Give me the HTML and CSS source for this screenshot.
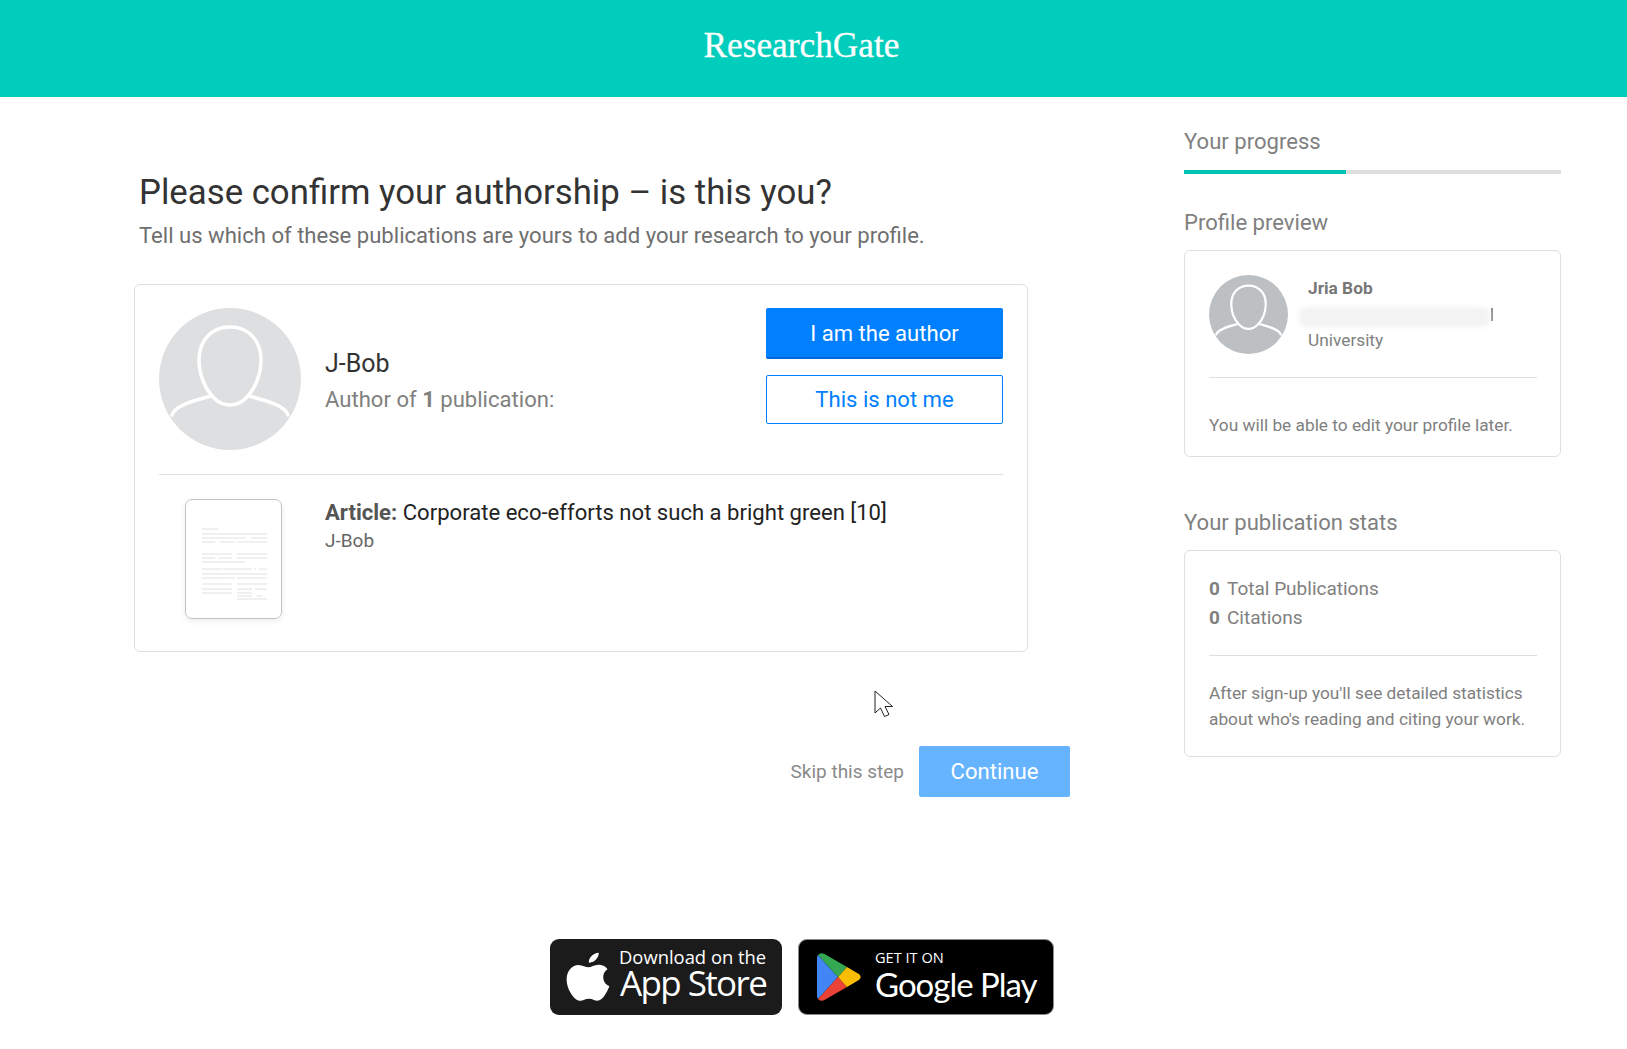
FILE: index.html
```html
<!DOCTYPE html>
<html lang="en">
<head>
    <meta charset="UTF-8">
    <meta name="viewport" content="width=device-width, initial-scale=1.0">
    <title>ResearchGate</title>
    <link rel="stylesheet" href="styles.css">
</head>
<body>
    <header class="top">
        <span class="logo">ResearchGate</span>
    </header>

    <div class="layout">
        <main class="main">
            <h1 class="title">Please confirm your authorship – is this you?</h1>
            <p class="subtitle">Tell us which of these publications are yours to add your research to your profile.</p>

            <section class="card">
                <div class="author">
                    <svg class="avatar" viewBox="0 0 142 142">
                        <circle class="avatar-bg" cx="71" cy="71" r="71"/>
                        <path class="avatar-line" d="M71 19C52 19 40 33 40 52C40 68 47 82 55 90C60 95 65 97 71 97C77 97 82 95 87 90C95 82 102 68 102 52C102 33 90 19 71 19Z"/>
                        <path class="avatar-line" d="M13 107C16 97 38 92 52 88M129 107C126 97 104 92 90 88"/>
                    </svg>
                    <div class="author-info">
                        <div class="author-name">J-Bob</div>
                        <div class="author-count">Author of <b>1</b> publication:</div>
                    </div>
                    <div class="author-actions">
                        <button class="btn btn-primary">I am the author</button>
                        <button class="btn btn-outline">This is not me</button>
                    </div>
                </div>
                <div class="publication">
                    <div class="thumb">
                        <svg class="thumb-lines" viewBox="0 0 66 76">
                            <path d="M0 1h16M0 6h65M0 10h44M49 10h16M0 14h13M18 14h15M35 14h30M0 26h30M35 26h30M0 30h13M16 30h14M35 30h30M0 34h43M0 41h20M21 41h29M52 41h2M57 41h8M0 46h65M0 50h24M25 50h8M35 50h30M0 56h30M35 56h30M0 61h30M35 61h15M53 61h12M0 65h30M35 65h15M35 68h15M55 68h5M35 71h30"/>
                        </svg>
                    </div>
                    <div class="publication-info">
                        <div class="publication-title"><b>Article:</b> Corporate eco-efforts not such a bright green [10]</div>
                        <div class="publication-author">J-Bob</div>
                    </div>
                </div>
            </section>

            <div class="footer-actions">
                <a class="skip">Skip this step</a>
                <button class="btn-continue">Continue</button>
            </div>
        </main>

        <aside class="side">
            <h2 class="side-title progress-title">Your progress</h2>
            <div class="progress"><div class="progress-fill"></div></div>

            <h2 class="side-title">Profile preview</h2>
            <div class="side-card">
                <div class="preview">
                    <svg class="avatar-small" viewBox="0 0 142 142">
                        <circle class="avatar-small-bg" cx="71" cy="71" r="71"/>
                        <path class="avatar-line-small" d="M71 19C52 19 40 33 40 52C40 68 47 82 55 90C60 95 65 97 71 97C77 97 82 95 87 90C95 82 102 68 102 52C102 33 90 19 71 19Z"/>
                        <path class="avatar-line-small" d="M13 107C16 97 38 92 52 88M129 107C126 97 104 92 90 88"/>
                    </svg>
                    <div class="preview-info">
                        <div class="preview-name">Jria Bob</div>
                        <div class="preview-blur"><span class="blur-bar"></span><span class="blur-end"></span></div>
                        <div class="preview-uni">University</div>
                    </div>
                </div>
                <p class="side-note">You will be able to edit your profile later.</p>
            </div>

            <h2 class="side-title stats-title">Your publication stats</h2>
            <div class="side-card">
                <div class="stats">
                    <div class="stat"><b>0</b>Total Publications</div>
                    <div class="stat"><b>0</b>Citations</div>
                </div>
                <p class="side-note stats-note">After sign-up you'll see detailed statistics about who's reading and citing your work.</p>
            </div>
        </aside>
    </div>

    <div class="badges">
        <div class="badge badge-apple">
            <svg class="apple-icon" viewBox="0 0 24 28">
                <path d="M17.800 1C17.900 3.400 15.600 6.400 12.500 6.300C12.200 3.800 14.800 1.100 17.800 1ZM22.500 9.800C19.100 11.900 19.500 17.300 23.500 19C22.300 22.100 19.900 26.800 17.100 26.800C15.400 26.800 14.500 25.700 12.500 25.700C10.500 25.700 9.400 26.800 7.800 26.800C4.700 26.800 0.500 20.700 0.500 15.300C0.500 10.500 3.600 7.500 6.900 7.500C8.900 7.500 10.800 8.800 12.300 8.800C13.700 8.800 15.400 7.300 18 7.400C19.300 7.400 21.300 8 22.500 9.800Z"/>
            </svg>
            <div class="badge-text">
                <span class="apple-small">Download on the</span>
                <span class="apple-big">App Store</span>
            </div>
        </div>
        <div class="badge badge-google">
            <svg class="play-icon" viewBox="0 0 44 50">
                <path fill="#4285f4" d="M1 3C0.400 3.800 0 4.800 0 6V44C0 45.200 0.400 46.200 1 47L21 25Z"/>
                <path fill="#34a853" d="M1 3C2.500 1.200 5 0.500 7.500 2L30 15L21 25Z"/>
                <path fill="#ea4335" d="M1 47C2.500 48.800 5 49.500 7.500 48L30 35L21 25Z"/>
                <path fill="#fbbc04" d="M30 15L41 21.500C44.500 23.500 44.500 26.500 41 28.500L30 35L21 25Z"/>
            </svg>
            <div class="badge-text">
                <span class="google-small">GET IT ON</span>
                <span class="google-big">Google Play</span>
            </div>
        </div>
    </div>

    <svg class="cursor" viewBox="0 0 20 28">
        <path d="M1 1V23L6.500 18L10.500 26.500L15 24.500L11 16.500H18.500Z"/>
    </svg>
</body>
</html>
```

FILE: styles.css
```css
* {
    margin: 0;
    padding: 0;
    box-sizing: border-box;
}

:root {
    --blue: #0080ff;
    --line: #dddfe1;
}

body {
    background-color: #fff;
    font-family: "Roboto", sans-serif;
    color: #333;
    height: 1049px;
    overflow: hidden;
    position: relative;
}

.top {
    background-color: #00cdbb;
    height: 97px;
    display: flex;
    justify-content: center;
    padding-right: 24px;
    padding-top: 25px;
}

.logo {
    font-family: "Liberation Serif", serif;
    font-size: 35.300px;
    line-height: 42px;
    color: #fff;
    -webkit-text-stroke: 0.300px #fff;
}

.layout {
    display: flex;
    padding-left: 134px;
}

.main {
    width: 936px;
    padding-top: 74px;
}

.title {
    font-size: 34.760px;
    font-weight: 400;
    line-height: 42px;
    margin-left: 5px;
    color: #333;
}

.subtitle {
    font-size: 22.080px;
    line-height: 26px;
    margin: 10px 0 0 5px;
    color: #6f6f6f;
}

.card {
    width: 894px;
    height: 368px;
    margin-top: 35px;
    padding: 23px 24px 0;
    border: 1px solid var(--line);
    border-radius: 6px;
}

.author {
    display: flex;
    align-items: flex-start;
    height: 167px;
    border-bottom: 1px solid var(--line);
}

.avatar {
    width: 142px;
    height: 142px;
    flex-shrink: 0;
}

.avatar-bg {
    fill: #dddfe1;
}

.avatar-small-bg {
    fill: #bcc0c3;
}

.avatar-line {
    fill: none;
    stroke: #fff;
    stroke-width: 3.500;
    stroke-linecap: round;
}

.avatar-line-small {
    fill: none;
    stroke: #fff;
    stroke-width: 4;
    stroke-linecap: round;
}

.author-info {
    margin-left: 24px;
    padding-top: 41px;
    flex: 1;
}

.author-name {
    font-size: 25px;
    line-height: 30px;
    color: #333;
}

.author-count {
    font-size: 22.080px;
    line-height: 26px;
    margin-top: 8px;
    color: #808080;
}

.author-actions {
    display: flex;
    flex-direction: column;
    width: 237px;
    gap: 16px;
}

.btn {
    font-family: "Roboto", sans-serif;
    font-size: 22.080px;
    width: 100%;
    border-radius: 2px;
    cursor: pointer;
}

.btn-primary {
    height: 51px;
    padding-top: 2px;
    background-color: var(--blue);
    color: #fff;
    border: none;
    border-bottom: 2px solid #0068d8;
}

.btn-outline {
    height: 49px;
    background-color: #fff;
    color: var(--blue);
    border: 1px solid var(--blue);
}

.publication {
    display: flex;
    padding-top: 24px;
}

.thumb {
    width: 97px;
    height: 120px;
    margin-left: 26px;
    border: 1px solid #c4c4c4;
    border-radius: 7px;
    box-shadow: 0 2px 6px rgba(0, 0, 0, 0.08);
    padding: 28px 14px 0 16px;
}

.thumb-lines {
    display: block;
    width: 66px;
    height: 76px;
    filter: blur(0.400px);
}

.thumb-lines path {
    fill: none;
    stroke: #ebebeb;
    stroke-width: 1.500;
}

.publication-info {
    margin-left: 43px;
    padding-top: 1px;
}

.publication-title {
    font-size: 22.080px;
    line-height: 26px;
    color: #222;
}

.publication-title b {
    color: #555;
    font-weight: 700;
}

.publication-author {
    font-size: 19px;
    line-height: 22px;
    margin-top: 4px;
    color: #666;
}

.footer-actions {
    display: flex;
    justify-content: flex-end;
    align-items: center;
    gap: 15px;
    margin-top: 94px;
}

.skip {
    font-size: 19px;
    color: #8a8a8a;
}

.btn-continue {
    width: 151px;
    height: 51px;
    background-color: #66b3ff;
    color: #fff;
    border: none;
    border-radius: 2px;
    font-family: "Roboto", sans-serif;
    font-size: 22.080px;
}

.side {
    width: 377px;
    margin-left: 114px;
    padding-top: 32px;
}

.side-title {
    font-size: 22.080px;
    font-weight: 400;
    line-height: 26px;
    color: #808080;
    margin-top: 36px;
}

.progress-title {
    margin-top: 0;
}

.stats-title {
    margin-top: 53px;
}

.progress {
    height: 4px;
    margin-top: 15px;
    background-color: #dedede;
}

.progress-fill {
    width: 162px;
    height: 4px;
    background-color: #00c4b4;
}

.side-card {
    height: 207px;
    margin-top: 14px;
    padding: 24px 23px 24px 24px;
    border: 1px solid var(--line);
    border-radius: 6px;
}

.preview {
    display: flex;
    height: 103px;
    border-bottom: 1px solid var(--line);
    gap: 20px;
}

.avatar-small {
    width: 79px;
    height: 79px;
    flex-shrink: 0;
}

.preview-info {
    padding-top: 3px;
}

.preview-name {
    font-size: 17.300px;
    font-weight: 700;
    line-height: 20px;
    color: #777;
}

.preview-blur {
    display: flex;
    align-items: center;
    height: 26px;
    margin: 6px 0 0 -9px;
}

.blur-bar {
    display: block;
    width: 191px;
    height: 20px;
    background-color: #f3f3f3;
    border-radius: 8px;
    filter: blur(2px);
}

.blur-end {
    display: block;
    width: 2px;
    height: 13px;
    margin: 0 0 6px 1px;
    background-color: #8d8d8d;
}

.preview-uni {
    font-size: 17.300px;
    line-height: 20px;
    color: #808080;
}

.side-note {
    font-size: 17.300px;
    line-height: 26px;
    color: #808080;
    margin-top: 34px;
}

.stats {
    height: 82px;
    margin-top: -1px;
    border-bottom: 1px solid var(--line);
    font-size: 19px;
    line-height: 29px;
    color: #808080;
}

.stat b {
    display: inline-block;
    width: 18px;
}

.stats-note {
    margin-top: 24px;
}

.badges {
    display: flex;
    gap: 16px;
    margin: 142px 0 0 550px;
}

.badge {
    height: 76px;
    border-radius: 9px;
    display: flex;
    align-items: center;
    flex-shrink: 0;
    color: #fff;
    white-space: nowrap;
}

.badge-apple {
    width: 232px;
    background-color: #1b1b1b;
    padding-left: 15px;
}

.badge-google {
    width: 256px;
    background-color: #000;
    border: 1px solid #8a8a8a;
    padding-left: 18px;
}

.apple-icon {
    width: 46px;
    height: 52px;
    fill: #fff;
    flex-shrink: 0;
}

.play-icon {
    width: 44px;
    height: 50px;
    flex-shrink: 0;
}

.badge-text {
    display: flex;
    flex-direction: column;
}

.badge-apple .badge-text {
    margin: 0 0 6px 8px;
}

.badge-google .badge-text {
    margin: 0 0 2px 14px;
}

.apple-small {
    font-family: "Open Sans", sans-serif;
    font-size: 18.400px;
    line-height: 18px;
}

.apple-big {
    font-family: "Open Sans", sans-serif;
    font-size: 35px;
    line-height: 34px;
    letter-spacing: -1.600px;
    margin-left: 1px;
}

.google-small {
    font-family: "Open Sans", sans-serif;
    font-size: 14.600px;
    line-height: 14px;
}

.google-big {
    font-family: "Lato", sans-serif;
    font-size: 33px;
    line-height: 36px;
    letter-spacing: -1px;
    margin-top: 2px;
}

.cursor {
    position: absolute;
    left: 874px;
    top: 690px;
    width: 20px;
    height: 28px;
}

.cursor path {
    fill: #fff;
    stroke: #222;
    stroke-width: 1;
}
```
